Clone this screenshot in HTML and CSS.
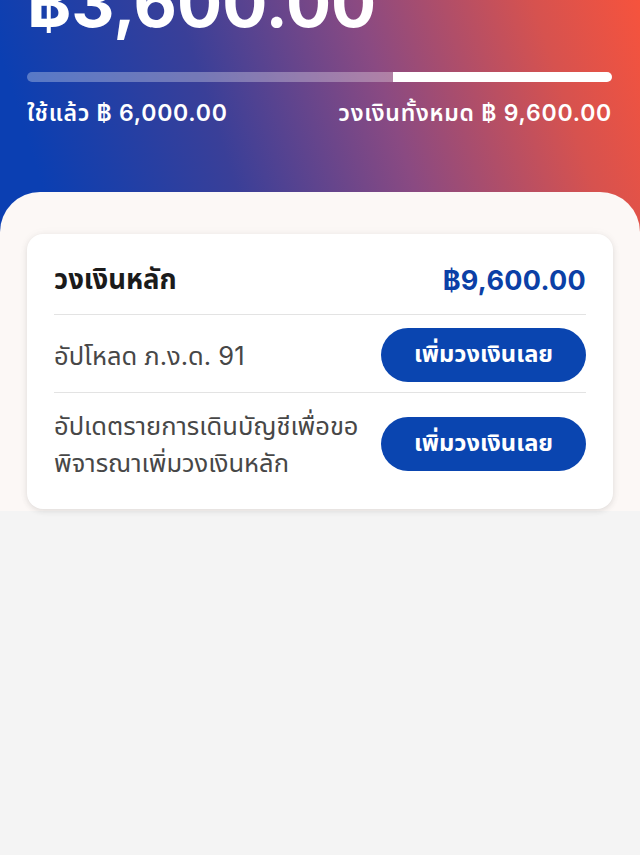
FILE: index.html
```html
<!DOCTYPE html>
<html lang="th">
<head>
<meta charset="utf-8">
<link rel="stylesheet" href="styles.css">
</head>
<body>
<div class="hero">
  <div class="balance">฿3,600.00</div>
  <div class="bar"><div class="bar-used" style="width:62.5%"></div><div class="bar-left"></div></div>
  <div class="bar-labels">
    <span>ใช้แล้ว ฿ 6,000.00</span>
    <span>วงเงินทั้งหมด ฿ 9,600.00</span>
  </div>
</div>
<div class="panel">
  <div class="card">
    <div class="card-head">
      <span class="card-title">วงเงินหลัก</span>
      <span class="card-amount">฿9,600.00</span>
    </div>
    <div class="card-row">
      <span class="row-text">อัปโหลด ภ.ง.ด. 91</span>
      <button class="btn">เพิ่มวงเงินเลย</button>
    </div>
    <div class="card-row row-last">
      <span class="row-text">อัปเดตรายการเดินบัญชีเพื่อขอ<br>พิจารณาเพิ่มวงเงินหลัก</span>
      <button class="btn">เพิ่มวงเงินเลย</button>
    </div>
  </div>
</div>
</body>
</html>
```

FILE: styles.css
```css
* { box-sizing: border-box; }
html, body { margin: 0; padding: 0; }
body {
  width: 640px;
  height: 855px;
  overflow: hidden;
  background: #f4f4f4;
  font-family: "Inter", "Noto Sans Thai", "Noto Sans", sans-serif;
}
.hero {
  background: linear-gradient(72deg, #0b3fb2 8%, #3a3f98 35%, #8a4a82 60%, #d6524f 85%, #f6533d 100%);
  padding: 0 28px 104px 27px;
  overflow: hidden;
}
.balance {
  color: #fff;
  font-size: 67px;
  font-weight: 700;
  line-height: 64px;
  margin-top: -29px;
  height: 64px;
}
.bar {
  margin-top: 37px;
  height: 10px;
  border-radius: 5px;
  overflow: hidden;
  display: flex;
}
.bar-used {
  height: 100%;
  background: rgba(255,255,255,0.3);
}
.bar-left {
  flex: 1;
  background: #fff;
}
.bar-labels {
  display: flex;
  justify-content: space-between;
  color: #fff;
  font-size: 23px;
  font-weight: 600;
  line-height: 30px;
  margin-top: 16px;
  letter-spacing: 0.75px;
}
.panel {
  margin-top: -40px;
  background: #fcf8f6;
  border-radius: 40px 40px 0 0;
  padding: 42px 27px 2px 27px;
}
.card {
  background: #fff;
  border-radius: 16px;
  box-shadow: 0 2px 6px rgba(0,0,0,0.10), 0 0 12px rgba(0,0,0,0.03);
  padding: 0 27px 28px 27px;
}
.card-head {
  display: flex;
  justify-content: space-between;
  align-items: center;
  height: 81px;
  border-bottom: 1px solid #e3e3e3;
  padding-top: 13px;
}
.card-title {
  font-size: 27.5px;
  font-weight: 700;
  color: #1b1b1b;
}
.card-amount {
  font-size: 27px;
  font-weight: 700;
  color: #0b40a6;
  letter-spacing: 0.3px;
}
.card-row {
  display: flex;
  justify-content: space-between;
  align-items: center;
  height: 78px;
  border-bottom: 1px solid #e3e3e3;
  padding-top: 3px;
}
.row-last {
  border-bottom: none;
  height: auto;
  padding-top: 14px;
}
.row-text {
  font-size: 25.5px;
  color: #474747;
  line-height: 37px;
}
.btn {
  border: none;
  background: #0a45b0;
  color: #fff;
  font-family: inherit;
  font-size: 23.7px;
  font-weight: 700;
  height: 54px;
  width: 205px;
  border-radius: 27px;
  padding: 0;
}
```
